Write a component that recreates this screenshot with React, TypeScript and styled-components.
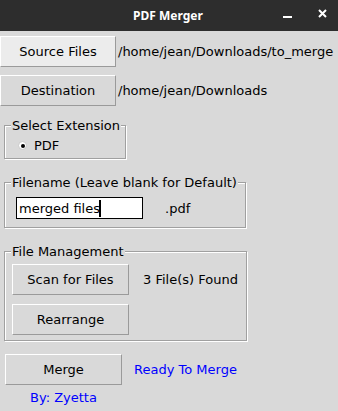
import * as React from "react";
import styled, { createGlobalStyle } from "styled-components";

const GlobalStyle = createGlobalStyle`
  html, body {
    margin: 0;
    padding: 0;
    background: #d9d9d9;
  }
  body {
    width: 338px;
    height: 411px;
    overflow: hidden;
    font-family: "DejaVu Sans", sans-serif;
    font-size: 13px;
    color: #000;
  }
`;

const Window = styled.div`
  width: 338px;
  height: 411px;
  background: #d9d9d9;
  display: flex;
  flex-direction: column;
  align-items: flex-start;
`;

const TitleBar = styled.div`
  width: 100%;
  height: 31px;
  flex: none;
  background: #2d2d2d;
  display: grid;
  grid-template-columns: 1fr auto 1fr;
  align-items: center;
`;

const TitleText = styled.div`
  grid-column: 2;
  font-family: "Noto Sans", sans-serif;
  font-weight: bold;
  font-size: 12px;
  color: #ffffff;
  margin-left: -2px;
`;

const TitleControls = styled.div`
  grid-column: 3;
  justify-self: end;
  display: flex;
  align-items: center;
  gap: 26px;
  padding-right: 11px;
`;

const Row = styled.div<{ $top: number; $left?: number }>`
  display: flex;
  align-items: center;
  margin-top: ${(p) => p.$top}px;
  margin-left: ${(p) => p.$left ?? 0}px;
`;

const Button = styled.button<{ $active?: boolean; $width?: number }>`
  box-sizing: border-box;
  width: ${(p) => p.$width ?? 116}px;
  height: 31px;
  padding: 0;
  margin: 0;
  font-family: "DejaVu Sans", sans-serif;
  font-size: 13px;
  color: #000;
  background: ${(p) => (p.$active ? "#ececec" : "#d9d9d9")};
  border-style: solid;
  border-width: 1px;
  border-color: #ffffff #9a9a9a #9a9a9a #ffffff;
  border-radius: 0;
`;

const Label = styled.span<{ $gap?: number; $color?: string }>`
  margin-left: ${(p) => p.$gap ?? 2}px;
  color: ${(p) => p.$color ?? "#000"};
  white-space: nowrap;
`;

const Group = styled.fieldset<{ $top: number; $width: number }>`
  box-sizing: border-box;
  margin: ${(p) => p.$top}px 0 0 4px;
  width: ${(p) => p.$width}px;
  padding: 0;
  border: 1px solid #a0a0a0;
  box-shadow: inset 1px 1px 0 #ffffff, 1px 1px 0 #ffffff;
  min-width: 0;
`;

const Legend = styled.legend`
  margin-left: 6px;
  padding: 0 1px;
  line-height: 15px;
  background: #d9d9d9;
`;

const GroupBody = styled.div<{ $pad: string }>`
  display: flex;
  flex-direction: column;
  align-items: flex-start;
  padding: ${(p) => p.$pad};
`;

const Inline = styled.div<{ $height?: number }>`
  display: flex;
  align-items: center;
  height: ${(p) => (p.$height ? `${p.$height}px` : "auto")};
`;

const Radio = styled.span`
  box-sizing: border-box;
  width: 9px;
  height: 9px;
  border-radius: 50%;
  background: #ffffff;
  border: 1px solid #c8c8c8;
  display: flex;
  align-items: center;
  justify-content: center;
  margin-left: 13px;

  &::after {
    content: "";
    width: 4px;
    height: 4px;
    border-radius: 50%;
    background: #000;
  }
`;

const Entry = styled.div`
  box-sizing: border-box;
  width: 127px;
  height: 22px;
  background: #ffffff;
  border: 1px solid #000;
  display: flex;
  align-items: center;
  padding-left: 2px;
`;

const Caret = styled.span`
  display: inline-block;
  width: 2px;
  height: 17px;
  background: #000;
  margin-left: -1px;
`;

const Credit = styled.div`
  margin: 5px 0 0 30px;
  color: #0000ff;
  line-height: 15px;
`;

export default function App() {
  return (
    <>
      <GlobalStyle />
      <Window>
        <TitleBar>
          <TitleText>PDF Merger</TitleText>
          <TitleControls>
            <svg width="9" height="4" viewBox="0 0 9 4" style={{ marginTop: 2 }}>
              <rect x="0" y="1" width="9" height="2" fill="#fff" />
            </svg>
            <svg width="9" height="9" viewBox="0 0 9 9" style={{ marginTop: -4 }}>
              <path d="M1 1 L8 8 M8 1 L1 8" stroke="#fff" strokeWidth="2" />
            </svg>
          </TitleControls>
        </TitleBar>

        <Row $top={5}>
          <Button $active>Source Files</Button>
          <Label>/home/jean/Downloads/to_merge</Label>
        </Row>
        <Row $top={8}>
          <Button>Destination</Button>
          <Label>/home/jean/Downloads</Label>
        </Row>

        <Group $top={12} $width={122}>
          <Legend>Select Extension</Legend>
          <GroupBody $pad="0">
            <Inline $height={25}>
              <Radio />
              <Label $gap={7}>PDF</Label>
            </Inline>
          </GroupBody>
        </Group>

        <Group $top={16} $width={242}>
          <Legend>Filename (Leave blank for Default)</Legend>
          <GroupBody $pad="7px 0 8px 11px">
            <Inline>
              <Entry>
                merged files
                <Caret />
              </Entry>
              <Label $gap={22}>.pdf</Label>
            </Inline>
          </GroupBody>
        </Group>

        <Group $top={16} $width={243}>
          <Legend>File Management</Legend>
          <GroupBody $pad="5px 0 5px 7px">
            <Inline>
              <Button $width={117}>Scan for Files</Button>
              <Label $gap={14}>3 File(s) Found</Label>
            </Inline>
            <Inline style={{ marginTop: 9 }}>
              <Button $width={117}>Rearrange</Button>
            </Inline>
          </GroupBody>
        </Group>

        <Row $top={13} $left={5}>
          <Button $width={117}>Merge</Button>
          <Label $gap={12} $color="#0000ff">
            Ready To Merge
          </Label>
        </Row>
        <Credit>By: Zyetta</Credit>
      </Window>
    </>
  );
}
